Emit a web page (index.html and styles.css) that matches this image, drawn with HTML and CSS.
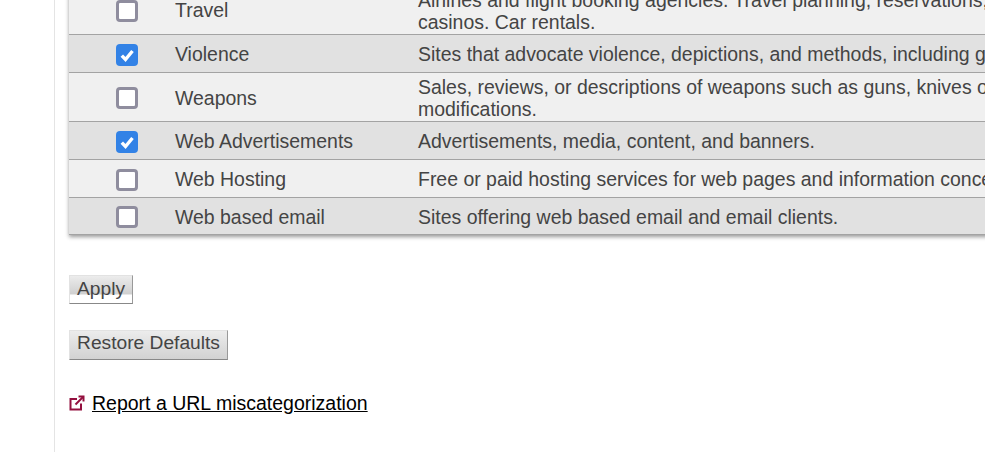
FILE: index.html
```html
<!DOCTYPE html>
<html lang="en">
<head>
    <meta charset="UTF-8">
    <title>URL Filtering</title>
    <link rel="stylesheet" href="styles.css">
</head>
<body>
    <div class="content">
        <table class="category-table">
            <tr class="low">
                <td class="col-check"><span class="check"></span></td>
                <td class="col-name">Travel</td>
                <td class="col-desc">Airlines and flight booking agencies. Travel planning, reservations, vehicle rentals, descriptions of travel destinations, or promotions for hotels or<br>casinos. Car rentals.</td>
            </tr>
            <tr>
                <td class="col-check"><span class="check checked"><svg viewBox="0 0 22 22"><path d="M5.8 11.600l3.700 3.900 7-8.500" /></svg></span></td>
                <td class="col-name">Violence</td>
                <td class="col-desc">Sites that advocate violence, depictions, and methods, including game violence and graphic images.</td>
            </tr>
            <tr class="low">
                <td class="col-check"><span class="check"></span></td>
                <td class="col-name low">Weapons</td>
                <td class="col-desc">Sales, reviews, or descriptions of weapons such as guns, knives or martial arts devices, or provide information on their use, accessories, or other<br>modifications.</td>
            </tr>
            <tr>
                <td class="col-check"><span class="check checked"><svg viewBox="0 0 22 22"><path d="M5.8 11.600l3.700 3.900 7-8.500" /></svg></span></td>
                <td class="col-name">Web Advertisements</td>
                <td class="col-desc">Advertisements, media, content, and banners.</td>
            </tr>
            <tr>
                <td class="col-check"><span class="check"></span></td>
                <td class="col-name">Web Hosting</td>
                <td class="col-desc">Free or paid hosting services for web pages and information concerning their development, publishing and promotion.</td>
            </tr>
            <tr class="low last">
                <td class="col-check"><span class="check"></span></td>
                <td class="col-name low">Web based email</td>
                <td class="col-desc">Sites offering web based email and email clients.</td>
            </tr>
        </table>

        <button class="btn btn-apply">Apply</button>
        <button class="btn btn-restore">Restore Defaults</button>

        <div class="report">
            <svg class="report-icon" viewBox="0 0 16 16"><path d="M8 4H1.500v10.500H12V8.500" /><path d="M6.500 9.500L14 2" /><path d="M9.500 1.500h5v5" /></svg>
            <a href="#">Report a URL miscategorization</a>
        </div>
    </div>
</body>
</html>
```

FILE: styles.css
```css
* {
    box-sizing: border-box;
}

html, body {
    margin: 0;
    height: 452px;
    overflow: hidden;
    background: white;
}

body {
    font-family: "Liberation Sans", Arial, sans-serif;
    font-size: 19.47px;
    color: #444;
}

.content {
    margin-left: 54px;
    margin-top: -14px;
    width: 1500px;
    height: 466px;
    padding-left: 14px;
    border-left: 1px solid #e4e4e4;
}

.category-table {
    width: 1480px;
    table-layout: fixed;
    border-collapse: collapse;
    box-shadow: 0 2px 4px rgba(0,0,0,0.4);
    line-height: 22px;
}

.category-table td {
    padding: 2px 0;
    height: 38px;
    border-top: 1px solid #a3a3a3;
    background: #f0f0f0;
    vertical-align: middle;
    white-space: nowrap;
}

.category-table tr:nth-child(even) td {
    background: #e1e1e1;
}

.category-table tr:first-child td {
    border-top: none;
}

.category-table tr.last td {
    height: 37px;
    border-bottom: 1px solid #a3a3a3;
    background: #e1e1e1;
}

/* text and boxes sit 1px below centre in these cells */
.category-table td.col-check,
.category-table td.low,
.category-table tr.low td.col-desc {
    padding-top: 3px;
    padding-bottom: 1px;
}

.category-table td.col-check {
    width: 106px;
    padding-left: 47px;
}

.col-name {
    width: 243px;
}

.check {
    display: block;
    width: 22px;
    height: 22px;
    background: white;
    border: 3px solid #8f8d9e;
    border-radius: 4px;
}

.check.checked {
    background: #3282e6;
    border: none;
}

.check svg {
    display: block;
    width: 22px;
    height: 22px;
    fill: none;
    stroke: white;
    stroke-width: 3.4;
}

.btn {
    display: block;
    padding: 0 7px;
    font-family: inherit;
    font-size: 19.2px;
    color: #444;
    white-space: nowrap;
    border: 1px solid #e2e2e2;
    border-right-color: #999;
    border-bottom-color: #888;
    border-radius: 0;
}

.btn-apply {
    margin-top: 40px;
    width: 64px;
    height: 29px;
    padding-bottom: 2px;
    background: linear-gradient(#ececec 0%, #cfcfcf 68%, white 69%);
}

.btn-restore {
    margin-top: 26px;
    width: 159px;
    height: 30px;
    padding-bottom: 5px;
    background: linear-gradient(#ececec, #d2d2d2);
}

.report {
    display: flex;
    align-items: center;
    gap: 7px;
    margin-top: 31px;
    line-height: 24px;
    font-size: 19.5px;
}

.report-icon {
    width: 16px;
    height: 16px;
    fill: none;
    stroke: #94103f;
    stroke-width: 2;
}

.report a {
    color: black;
}
```
